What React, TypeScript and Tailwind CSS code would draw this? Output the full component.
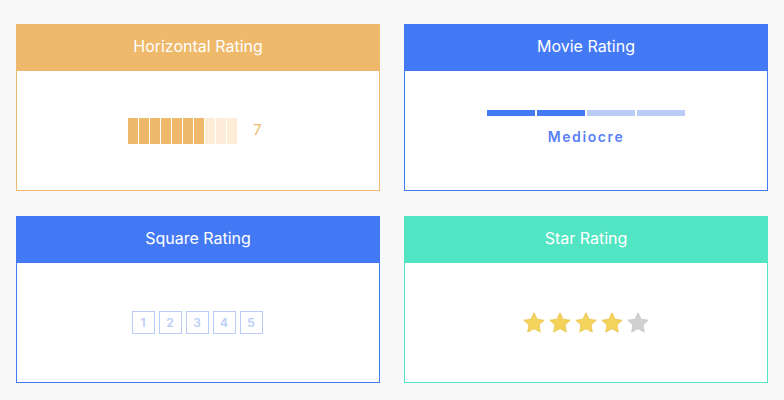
import React from 'react';

interface CardProps {
  title: string;
  color: string;
  children: React.ReactNode;
}

function RatingCard({ title, color, children }: CardProps) {
  const styles: Record<string, { head: string; border: string }> = {
    orange: { head: 'bg-[#eeb96a]', border: 'border-[#eeb96a]' },
    blue: { head: 'bg-[#4479f6]', border: 'border-[#4479f6]' },
    teal: { head: 'bg-[#52e5c3]', border: 'border-[#52e5c3]' },
  };
  const s = styles[color];
  return (
    <div className={`flex flex-col border ${s.border} bg-white h-[167px]`}>
      <div className={`${s.head} h-[46px] flex items-center justify-center text-white text-[16px] pb-[4px]`}>
        {title}
      </div>
      <div className="flex-1 flex flex-col items-center justify-center">{children}</div>
    </div>
  );
}

function HorizontalRating({ value }: { value: number }) {
  return (
    <div className="flex items-center -ml-[6px]">
      <div className="flex gap-px">
        {Array.from({ length: 10 }).map((_, i) => (
          <div
            key={i}
            className={`w-[10px] h-[26px] ${i < value ? 'bg-[#eeb96a]' : 'bg-[#fcecd8]'}`}
          />
        ))}
      </div>
      <span className="ml-[16px] text-[15px] text-[#eeb96a]">{value}</span>
    </div>
  );
}

function MovieRating() {
  return (
    <div className="flex flex-col items-center -mt-[4px]">
      <div className="flex gap-[2px]">
        <div className="w-[48px] h-[6px] bg-[#4479f6]" />
        <div className="w-[48px] h-[6px] bg-[#4479f6]" />
        <div className="w-[48px] h-[6px] bg-[#b9cdf8]" />
        <div className="w-[48px] h-[6px] bg-[#b9cdf8]" />
      </div>
      <div className="mt-[10px] text-[14px] font-semibold tracking-[1.6px] text-[#5a80f6]">Mediocre</div>
    </div>
  );
}

function SquareRating() {
  return (
    <div className="flex gap-[4px] -ml-[2px]">
      {[1, 2, 3, 4, 5].map((n) => (
        <div
          key={n}
          className="w-[23px] h-[23px] border border-[#b9cdf8] flex items-center justify-center text-[12px] font-semibold text-[#b9cdf8]"
        >
          {n}
        </div>
      ))}
    </div>
  );
}

function Star({ filled }: { filled: boolean }) {
  return (
    <svg width="24" height="24" viewBox="0 0 24 24">
      <path
        d="M12 1.8l3.1 6.5 7.1.9-5.2 4.9 1.3 7-6.3-3.4-6.3 3.4 1.3-7-5.2-4.9 7.1-.9z"
        fill={filled ? '#f3d35b' : '#d0d0d0'}
        stroke={filled ? '#e8c44a' : '#c4c4c4'}
        strokeWidth="0.8"
        strokeLinejoin="round"
      />
    </svg>
  );
}

function StarRating({ value }: { value: number }) {
  return (
    <div className="flex gap-[2px]">
      {[0, 1, 2, 3, 4].map((i) => (
        <Star key={i} filled={i < value} />
      ))}
    </div>
  );
}

export default function App() {
  return (
    <div
      className="w-[784px] h-[400px] bg-[#f8f8f8] px-[16px] pt-[24px]"
      style={{ fontFamily: 'Inter, "Noto Sans", sans-serif' }}
    >
      <div className="grid grid-cols-2 gap-x-[24px] gap-y-[25px]">
        <RatingCard title="Horizontal Rating" color="orange">
          <HorizontalRating value={7} />
        </RatingCard>
        <RatingCard title="Movie Rating" color="blue">
          <MovieRating />
        </RatingCard>
        <RatingCard title="Square Rating" color="blue">
          <SquareRating />
        </RatingCard>
        <RatingCard title="Star Rating" color="teal">
          <StarRating value={4} />
        </RatingCard>
      </div>
    </div>
  );
}
